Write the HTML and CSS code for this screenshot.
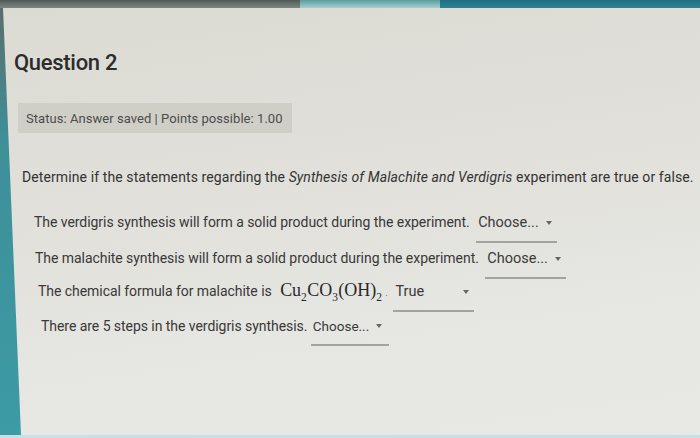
FILE: index.html
```html
<!DOCTYPE html>
<html>
<head>
<meta charset="utf-8">
<link rel="stylesheet" href="styles.css">
</head>
<body>
<div class="screen">
  <div class="topbar">
    <div class="seg seg-dark"></div>
    <div class="seg seg-light"></div>
    <div class="seg seg-teal"></div>
  </div>
  <div class="main">
    <h1 class="title">Question 2</h1>
    <div class="status">Status: Answer saved | Points possible: 1.00</div>
    <p class="intro">Determine if the statements regarding the <em>Synthesis of Malachite and Verdigris</em> experiment are true or false.</p>
    <div class="row r1">The verdigris synthesis will form a solid product during the experiment. <span class="select"><span>Choose...</span><span class="caret"></span></span></div>
    <div class="row r2">The malachite synthesis will form a solid product during the experiment. <span class="select"><span>Choose...</span><span class="caret"></span></span></div>
    <div class="row r3">The chemical formula for malachite is <span class="formula">Cu<sub>2</sub>CO<sub>3</sub>(OH)<sub>2</sub></span><span class="dot">.</span> <span class="select sel3"><span>True</span><span class="caret"></span></span></div>
    <div class="row r4">There are 5 steps in the verdigris synthesis. <span class="select sel4"><span>Choose...</span><span class="caret"></span></span></div>
  </div>
  <div class="bottombar"></div>
</div>
</body>
</html>
```
FILE: styles.css
```css
html, body {
  margin: 0;
  padding: 0;
}
body {
  width: 700px;
  height: 438px;
  overflow: hidden;
  font-family: Roboto, "Liberation Sans", sans-serif;
  color: #3a3a3a;
  background: #dcdbd4;
}
.screen {
  display: flex;
  flex-direction: column;
  height: 438px;
}
.topbar {
  display: flex;
  height: 8px;
  flex: 0 0 8px;
}
.seg-dark {
  flex: 0 0 300px;
  background: linear-gradient(#4f5a58, #7f8784);
}
.seg-light {
  flex: 0 0 140px;
  background: linear-gradient(#5a9ea2, #a9cccd);
}
.seg-teal {
  flex: 1;
  background: linear-gradient(#1f6f83, #2f8290);
}
.main {
  position: relative;
  flex: 1;
  background: linear-gradient(172deg, #dbdad3 0%, #e0dfd9 35%, #e6e6e2 70%, #e8e8e5 100%);
  overflow: hidden;
}
.main::before {
  content: "";
  position: absolute;
  left: 0;
  top: 0;
  bottom: 0;
  width: 21px;
  background: linear-gradient(#5b6d6c 0%, #3e8f98 30%, #3c9ba5 100%);
  clip-path: polygon(0 0, 3px 0, 21px 100%, 0 100%);
}
.title {
  margin: 42px 0 0 14px;
  font-size: 22px;
  line-height: 26px;
  font-weight: 500;
  color: #2c2c2c;
  letter-spacing: -0.3px;
}
.status {
  margin: 27px 0 0 18px;
  width: 274px;
  height: 30px;
  box-sizing: border-box;
  padding: 0 8px;
  display: flex;
  align-items: center;
  background: #cfcfc7;
  font-size: 13px;
  letter-spacing: 0.05px;
  color: #4c4c4c;
}
.intro {
  margin: 34px 0 0 22px;
  font-size: 14px;
  line-height: 20px;
  color: #333;
  letter-spacing: 0.1px;
  white-space: nowrap;
}
.row {
  font-size: 14px;
  line-height: 20px;
  height: 34px;
  white-space: nowrap;
  color: #383838;
  letter-spacing: -0.05px;
}
.r1 { margin: 25px 0 0 34px; }
.r2 { margin: 2px 0 0 35px; }
.r3 { margin: -2px 0 0 38px; }
.r4 { margin: 2px 0 0 41px; }
.select {
  display: inline-flex;
  align-items: center;
  justify-content: space-between;
  width: 81px;
  box-sizing: border-box;
  padding: 0 5px 8px 2px;
  margin-left: 3px;
  border-bottom: 2px solid #a2a3a0;
  font-size: 14.5px;
  letter-spacing: 0;
  color: #3a3a3a;
  vertical-align: baseline;
}
.sel3 { margin-left: 2px; }
.sel4 { width: 78px; margin-left: 0; font-size: 13.5px; padding-right: 7px; }
.caret {
  width: 0;
  height: 0;
  border-left: 3.5px solid transparent;
  border-right: 3.5px solid transparent;
  border-top: 4px solid #666;
}
.formula {
  font-family: "Liberation Serif", "DejaVu Serif", serif;
  font-size: 18px;
  color: #2a2a2a;
  margin-left: 5px;
}
.formula sub {
  font-size: 11.5px;
  line-height: 0;
  margin-right: 0.5px;
}
.dot {
  font-size: 10px;
  color: #777;
  margin-left: 3px;
}
.bottombar {
  flex: 0 0 3px;
  background: #c3e1e6;
}
```
